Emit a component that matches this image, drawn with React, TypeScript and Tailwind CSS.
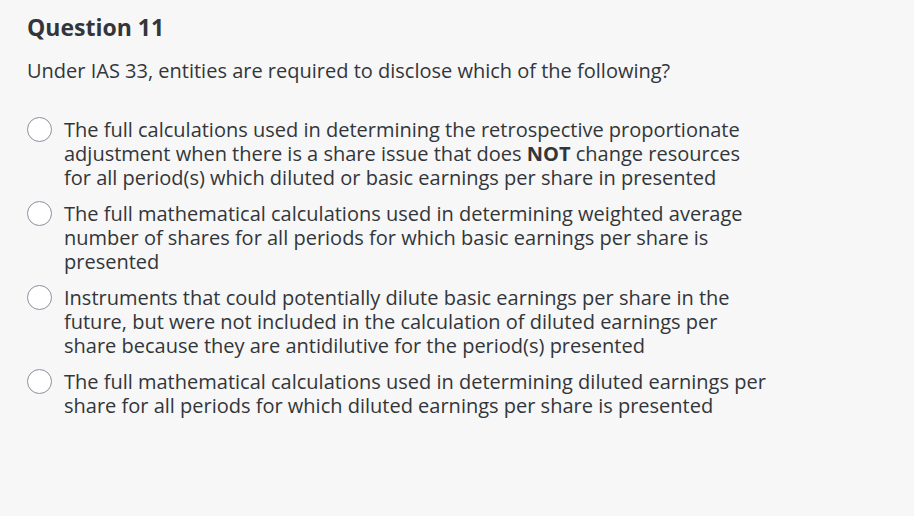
import React from 'react';

const options = [
  <>
    The full calculations used in determining the retrospective proportionate adjustment when there is a share issue
    that does <strong className="font-bold">NOT</strong> change resources for all period(s) which diluted or basic
    earnings per share in presented
  </>,
  <>
    The full mathematical calculations used in determining weighted average number of shares for all periods for which
    basic earnings per share is presented
  </>,
  <>
    Instruments that could potentially dilute basic earnings per share in the future, but were not included in the
    calculation of diluted earnings per share because they are antidilutive for the period(s) presented
  </>,
  <>
    The full mathematical calculations used in determining diluted earnings per share for all periods for which diluted
    earnings per share is presented
  </>,
];

export default function App() {
  return (
    <div
      className="min-h-[516px] w-full bg-[#f7f7f7] px-[27px] pt-[11px] text-[#32363a]"
      style={{ fontFamily: '"Open Sans", "Noto Sans", sans-serif' }}
    >
      <h2 className="text-[23px] font-bold leading-[32px]">Question 11</h2>
      <p className="mt-[16px] text-[20px] leading-[24px]">
        Under IAS 33, entities are required to disclose which of the following?
      </p>
      <div className="mt-[35px] flex flex-col gap-[12px]">
        {options.map((opt, i) => (
          <label key={i} className="flex items-start gap-[12px]">
            <span className="mt-[-1px] h-[25px] w-[25px] shrink-0 rounded-full border-[1.5px] border-[#89919a] bg-white" />
            <span className="max-w-[706px] text-[20px] leading-[24px]">{opt}</span>
          </label>
        ))}
      </div>
    </div>
  );
}
